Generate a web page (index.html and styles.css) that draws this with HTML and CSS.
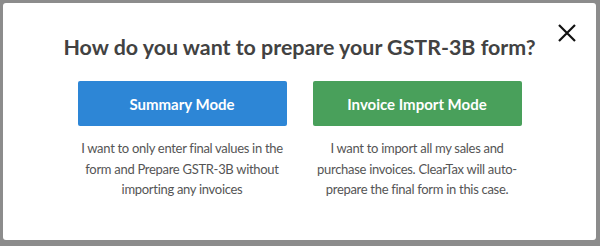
FILE: index.html
```html
<!DOCTYPE html>
<html>
<head>
<meta charset="utf-8">
<link rel="stylesheet" href="styles.css">
</head>
<body>
<div class="modal">
  <button class="close" aria-label="Close">
    <svg width="20" height="20" viewBox="0 0 20 20"><path d="M2 2 L18 18 M18 2 L2 18" stroke="#111" stroke-width="2.2" fill="none"/></svg>
  </button>
  <h1 class="title">How do you want to prepare your GSTR-3B form?</h1>
  <div class="options">
    <div class="option">
      <div class="btn btn-blue">Summary Mode</div>
      <p class="desc">I want to only enter final values in the form and Prepare GSTR-3B without importing any invoices</p>
    </div>
    <div class="option">
      <div class="btn btn-green">Invoice Import Mode</div>
      <p class="desc">I want to import all my sales and purchase invoices. ClearTax will auto-prepare the final form in this case.</p>
    </div>
  </div>
</div>
</body>
</html>
```
FILE: styles.css
```css
html, body { margin: 0; padding: 0; }
body {
  background: #8c8c8c;
  width: 600px;
  height: 246px;
  padding: 3px 4px 6px 3px;
  box-sizing: border-box;
  font-family: Lato, "Noto Sans", sans-serif;
}
.modal {
  position: relative;
  background: #fff;
  height: 237px;
  border-radius: 3px;
  display: flex;
  flex-direction: column;
  align-items: center;
}
.close {
  position: absolute;
  top: 19px;
  right: 18px;
  width: 22px;
  height: 22px;
  padding: 0;
  border: 0;
  background: none;
  display: flex;
  align-items: center;
  justify-content: center;
}
.title {
  margin: 30px 0 0;
  font-size: 21.4px;
  font-weight: 700;
  color: #424242;
  line-height: 28px;
}
.options {
  display: flex;
  gap: 26px;
  margin-top: 20px;
}
.option {
  width: 209px;
  display: flex;
  flex-direction: column;
  align-items: center;
}
.btn {
  width: 100%;
  height: 45px;
  border-radius: 2px;
  color: #fff;
  font-size: 15px;
  font-weight: 700;
  display: flex;
  align-items: center;
  justify-content: center;
}
.btn-blue { background: #2d86d6; }
.btn-green { background: #49a05b; }
.desc {
  margin: 12px 0 0;
  text-align: center;
  font-size: 13px;
  letter-spacing: -0.3px;
  line-height: 20.5px;
  color: #555;
  width: 215px;
}
```
